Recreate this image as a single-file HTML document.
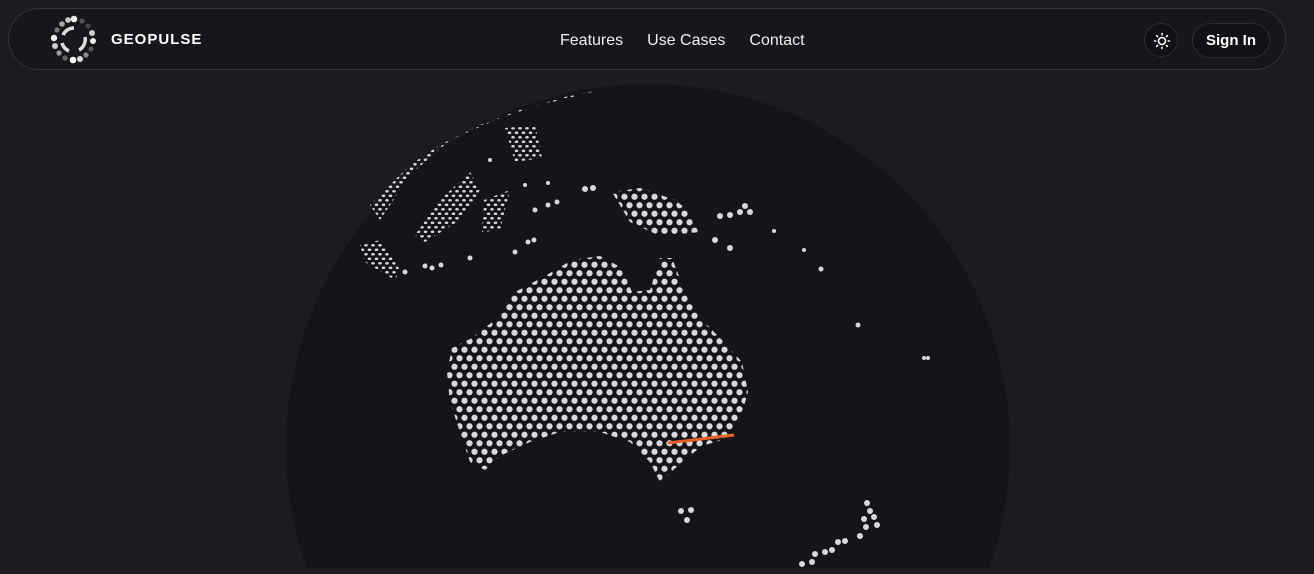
<!DOCTYPE html>
<html><head><meta charset="utf-8"><style>
html,body{margin:0;padding:0;width:1314px;height:574px;overflow:hidden;background:#1c1b20;font-family:"Liberation Sans",sans-serif;color:#fff}
.nav{position:absolute;left:8px;top:8px;width:1278px;height:62px;border:1px solid #33323a;border-radius:32px;background:#17161b;box-sizing:border-box}
.brand{position:absolute;left:102px;top:22px;font-weight:bold;font-size:15px;letter-spacing:1px}
.links{position:absolute;left:551px;top:23px;font-size:16px;color:#f0f0f0;white-space:nowrap}
.links span{margin-right:24px}
.sun{position:absolute;left:1135px;top:14px;width:34px;height:34px;border-radius:50%;border:1px solid #2c2b31;background:#121115;box-sizing:border-box}
.sign{position:absolute;left:1183px;top:14px;width:78px;height:35px;border-radius:18px;border:1px solid #2c2b31;background:#121115;box-sizing:border-box;font-size:15px;font-weight:bold;text-align:center;line-height:33px}
</style></head><body>
<svg width="1314" height="574" style="position:absolute;left:0;top:0">
<defs>
<pattern id="big" width="10" height="17" patternUnits="userSpaceOnUse" x="447" y="252">
<g fill="#d8d8dc"><circle cx="2.5" cy="4.25" r="3.1"/><circle cx="12.5" cy="4.25" r="3.1"/><circle cx="7.5" cy="12.75" r="3.1"/><circle cx="-2.5" cy="12.75" r="3.1"/></g></pattern>
<pattern id="sm" width="7" height="9" patternUnits="userSpaceOnUse">
<g fill="#d8d8dc"><ellipse cx="2" cy="2.25" rx="1.8" ry="1.3"/><ellipse cx="5.5" cy="6.75" rx="1.8" ry="1.3"/><ellipse cx="-1.5" cy="6.75" rx="1.8" ry="1.3"/><ellipse cx="9" cy="2.25" rx="1.8" ry="1.3"/></g></pattern>
<clipPath id="gc"><rect x="0" y="0" width="1314" height="568"/></clipPath>
</defs>
<g clip-path="url(#gc)">
<circle cx="648" cy="446" r="362" fill="#151419"/>
<polygon fill="url(#big)" points="447,372 452,348 472,338 500,316 515,292 545,276 572,260 600,256 622,268 632,292 650,290 660,258 672,258 682,284 700,318 722,340 742,362 748,392 740,420 722,440 702,446 682,462 660,482 650,462 630,442 600,432 560,432 530,442 500,456 485,470 470,462 460,432 450,402"/>
<polygon fill="url(#big)" points="612,192 640,188 675,200 690,212 700,232 660,236 630,222"/>
<polygon fill="url(#sm)" points="415,235 440,200 470,172 480,190 460,220 425,242"/>
<polygon fill="url(#sm)" points="370,205 410,165 440,145 480,125 520,110 600,90 560,98 500,118 450,140 410,175 380,220"/>
<polygon fill="url(#sm)" points="360,245 380,240 400,270 395,280 365,262"/>
<polygon fill="url(#sm)" points="505,128 535,125 542,158 515,162"/>
<polygon fill="url(#sm)" points="484,200 510,190 500,230 482,232"/>
<g fill="#d8d8dc">
<circle cx="681" cy="511" r="3"/><circle cx="691" cy="510" r="3"/><circle cx="687" cy="520" r="3"/>
<circle cx="867" cy="503" r="3"/><circle cx="870" cy="511" r="3"/><circle cx="864" cy="519" r="3"/><circle cx="874" cy="517" r="3"/><circle cx="877" cy="525" r="3"/><circle cx="866" cy="527" r="3"/><circle cx="860" cy="536" r="3"/>
<circle cx="802" cy="564" r="3"/><circle cx="812" cy="562" r="3"/><circle cx="815" cy="554" r="3"/><circle cx="825" cy="552" r="3"/><circle cx="832" cy="550" r="3"/><circle cx="838" cy="542" r="3"/><circle cx="845" cy="541" r="3"/>
<circle cx="858" cy="325" r="2.5"/><circle cx="924" cy="358" r="2"/><circle cx="928" cy="358" r="2"/><circle cx="821" cy="269" r="2.5"/><circle cx="804" cy="250" r="2"/><circle cx="774" cy="231" r="2"/>
<circle cx="720" cy="216" r="3"/><circle cx="730" cy="215" r="3"/><circle cx="740" cy="212" r="3"/><circle cx="745" cy="206" r="3"/><circle cx="750" cy="212" r="3"/><circle cx="715" cy="240" r="3"/><circle cx="730" cy="248" r="3"/>
<circle cx="585" cy="189" r="3"/><circle cx="593" cy="188" r="3"/><circle cx="548" cy="205" r="2.5"/><circle cx="557" cy="202" r="2.5"/><circle cx="535" cy="210" r="2.5"/><circle cx="515" cy="252" r="2.5"/><circle cx="528" cy="242" r="2.5"/><circle cx="534" cy="240" r="2.5"/>
<circle cx="470" cy="258" r="2.5"/><circle cx="441" cy="265" r="2.5"/><circle cx="425" cy="266" r="2.5"/><circle cx="432" cy="268" r="2.5"/><circle cx="405" cy="272" r="2.5"/><circle cx="548" cy="183" r="2"/><circle cx="525" cy="185" r="2"/><circle cx="490" cy="160" r="2"/>
</g>
<line x1="668" y1="443" x2="734" y2="435" stroke="#e8612c" stroke-width="3"/>
</g>
</svg>
<div class="nav">
<svg style="position:absolute;left:40px;top:6px" width="50" height="50" viewBox="0 0 50 50">
<g><circle cx="25" cy="4" r="3.3" fill="#eee"/><circle cx="33" cy="6" r="2.6" fill="#555"/><circle cx="39" cy="11" r="2.6" fill="#444"/><circle cx="43" cy="18" r="3" fill="#ccc"/><circle cx="44" cy="26" r="3" fill="#eee"/><circle cx="42" cy="34" r="2.6" fill="#555"/><circle cx="37" cy="40" r="2.6" fill="#888"/><circle cx="31" cy="44" r="3" fill="#ddd"/><circle cx="24" cy="45" r="3.3" fill="#fff"/><circle cx="16" cy="43" r="2.6" fill="#666"/><circle cx="10" cy="38" r="2.6" fill="#999"/><circle cx="6" cy="31" r="3" fill="#ccc"/><circle cx="5" cy="23" r="3.2" fill="#eee"/><circle cx="8" cy="15" r="2.6" fill="#777"/><circle cx="13" cy="9" r="2.8" fill="#aaa"/><circle cx="19" cy="5" r="2.8" fill="#ccc"/></g>
<path d="M14 20 A12 12 0 0 1 25 13 M36 22 A12 12 0 0 1 30 35 M20 36 A12 12 0 0 1 13 28" stroke="#ddd" stroke-width="3.5" fill="none"/>
</svg>
<div class="brand">GEOPULSE</div>
<div class="links"><span>Features</span><span>Use Cases</span><span>Contact</span></div>
<div class="sun"><svg width="34" height="34" viewBox="0 0 34 34"><circle cx="17" cy="17" r="3.5" stroke="#fff" stroke-width="1.6" fill="none"/><g stroke="#fff" stroke-width="1.6" stroke-linecap="round"><path d="M17 9.5v1.2M17 23.3v1.2M9.5 17h1.2M23.3 17h1.2M11.7 11.7l.8.8M21.5 21.5l.8.8M11.7 22.3l.8-.8M21.5 12.5l.8-.8"/></g></svg></div>
<div class="sign">Sign In</div>
</div>
</body></html>
